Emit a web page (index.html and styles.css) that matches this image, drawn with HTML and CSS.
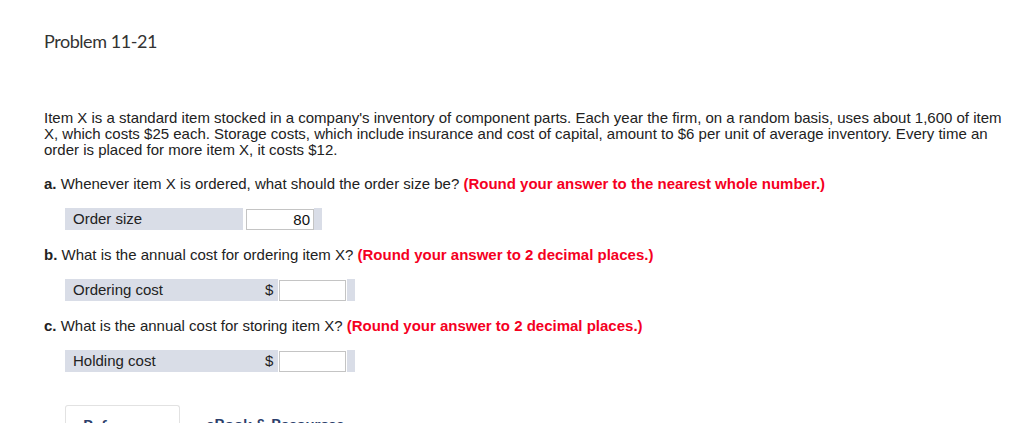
FILE: index.html
```html
<!DOCTYPE html>
<html>
<head>
<meta charset="utf-8">
<link rel="stylesheet" href="styles.css">
</head>
<body>
<div class="page">
  <h1 class="title">Problem 11-21</h1>
  <p class="intro">Item X is a standard item stocked in a company's inventory of component parts. Each year the firm, on a random basis, uses about 1,600 of item X, which costs $25 each. Storage costs, which include insurance and cost of capital, amount to $6 per unit of average inventory. Every time an order is placed for more item X, it costs $12.</p>

  <p class="q"><b>a.</b> Whenever item X is ordered, what should the order size be? <span class="hint">(Round your answer to the nearest whole number.)</span></p>
  <div class="row row-a">
    <div class="label">Order size</div>
    <div class="cell"><span class="input">80</span></div>
  </div>

  <p class="q"><b>b.</b> What is the annual cost for ordering item X? <span class="hint">(Round your answer to 2 decimal places.)</span></p>
  <div class="row row-b">
    <div class="label">Ordering cost</div>
    <div class="dollar">$</div>
    <div class="cell"><span class="input"></span></div>
  </div>

  <p class="q"><b>c.</b> What is the annual cost for storing item X? <span class="hint">(Round your answer to 2 decimal places.)</span></p>
  <div class="row row-b">
    <div class="label">Holding cost</div>
    <div class="dollar">$</div>
    <div class="cell"><span class="input"></span></div>
  </div>

  <div class="tabs">
    <div class="tab active">References</div>
    <div class="tab">eBook &amp; Resources</div>
  </div>
</div>
</body>
</html>
```

FILE: styles.css
```css
html, body {
  margin: 0;
  padding: 0;
  background: #fff;
  overflow: hidden;
}
.page {
  padding: 28px 0 0 44px;
  width: 966px;
  font-family: "Liberation Sans", Arial, sans-serif;
  color: #222;
}
.title {
  margin: 0;
  font-family: "Lato", "Open Sans", sans-serif;
  font-weight: 400;
  font-size: 18px;
  letter-spacing: -0.45px;
  line-height: 26px;
  color: #333;
}
.intro {
  margin: 56px 0 0 0;
  font-size: 15px;
  line-height: 16px;
}
.q {
  margin: 18px 0 0 0;
  font-size: 15px;
  line-height: 16px;
}
.q b { font-weight: 700; }
.hint {
  color: #f5001f;
  font-weight: 700;
}
.row {
  display: flex;
  margin: 16px 0 0 21px;
  height: 22px;
  font-size: 15px;
}
.row + .q { margin-top: 17px; }
.label {
  background: #d9dde7;
  width: 170px;
  padding-left: 8px;
  line-height: 22px;
}
.row-a .cell {
  margin-left: 3px;
  display: flex;
  align-items: center;
  padding-right: 8px;
  background: linear-gradient(to right, #fff 68px, #d9dde7 68px);
}
.row-b .label { width: 192px; }
.dollar {
  background: #d9dde7;
  width: 13px;
  line-height: 22px;
  text-align: left;
}
.row-b .cell {
  display: flex;
  align-items: center;
  padding-right: 9px;
  background: linear-gradient(to right, #fff 69px, #d9dde7 69px);
}
.input {
  box-sizing: border-box;
  display: block;
  width: 68px;
  height: 21px;
  border: 1px solid #c4c4c4;
  background: #fff;
  text-align: right;
  padding-right: 3px;
  line-height: 19px;
  font-size: 15px;
  color: #111;
}
.row-b .input { width: 67px; margin-left: 1px; }
.tabs {
  display: flex;
  margin: 33px 0 0 21px;
  font-size: 16px;
  line-height: 18px;
  font-family: "Lato", sans-serif;
  font-weight: 700;
}
.tab {
  padding: 10px 16px 10px 17px;
  color: #2c3e6b;
}
.tab.active {
  border: 1px solid #e2e2e2;
  border-bottom: none;
  border-radius: 3px 3px 0 0;
  width: 80px;
}
.tab + .tab { padding-left: 26px; }
```
